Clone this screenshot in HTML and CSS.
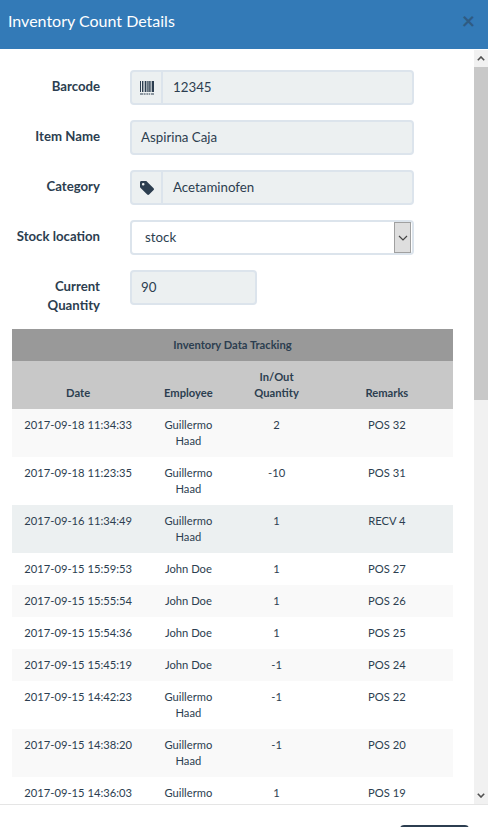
FILE: index.html
```html
<!DOCTYPE html>
<html lang="en">
<head>
    <meta charset="UTF-8">
    <title>Inventory Count Details</title>
    <link rel="stylesheet" href="styles.css">
</head>
<body>
    <div class="modal">
        <div class="modal-header">
            <h4 class="modal-title">Inventory Count Details</h4>
            <span class="close">&times;</span>
        </div>

        <div class="modal-main">
            <div class="modal-body">
                <div class="form-row">
                    <label class="form-label">Barcode</label>
                    <div class="input-group">
                        <span class="addon">
                            <svg class="icon" viewBox="0 0 14 14" width="14" height="14">
                                <path fill="#2c3e50" d="M0 0h1v11H0zM2 0h1v11H2zM3.6 0h.7v11h-.7zM5 0h1.4v11H5zM7 0h.7v11H7zM8.4 0h1.4v11H8.4zM10.4 0h.7v11h-.7zM11.8 0H14v11h-2.2zM0 12.6h3v1H0zM3.6 12.6h2v1h-2zM6.4 12.6h1.6v1H6.4zM8.6 12.6H10v1H8.6zM10.8 12.6H14v1h-3.2z"/>
                            </svg>
                        </span>
                        <div class="form-control">12345</div>
                    </div>
                </div>
                <div class="form-row">
                    <label class="form-label">Item Name</label>
                    <div class="form-control boxed">Aspirina Caja</div>
                </div>
                <div class="form-row">
                    <label class="form-label">Category</label>
                    <div class="input-group">
                        <span class="addon">
                            <svg class="icon" viewBox="0 0 14 14" width="14" height="14">
                                <path fill="#2c3e50" d="M0 1.4C0 .6.6 0 1.4 0h4.4c.4 0 .8.2 1 .4l6.8 6.8c.5.5.5 1.4 0 1.9l-4.5 4.5c-.5.5-1.4.5-1.9 0L.4 6.8C.2 6.6 0 6.2 0 5.8zM3.2 2a1.3 1.3 0 1 0 0 2.6 1.3 1.3 0 0 0 0-2.6z"/>
                            </svg>
                        </span>
                        <div class="form-control">Acetaminofen</div>
                    </div>
                </div>
                <div class="form-row">
                    <label class="form-label">Stock location</label>
                    <div class="select-box">
                        <span class="select-value">stock</span>
                        <span class="select-arrow">
                            <svg viewBox="0 0 10 6" width="10" height="6">
                                <path d="M1 1l4 4 4-4" fill="none" stroke="#444" stroke-width="1.2"/>
                            </svg>
                        </span>
                    </div>
                </div>
                <div class="form-row">
                    <label class="form-label">Current Quantity</label>
                    <div class="form-control boxed short">90</div>
                </div>

                <table class="tracking">
                    <colgroup>
                        <col class="col-wide">
                        <col class="col-narrow">
                        <col class="col-narrow">
                        <col class="col-wide">
                    </colgroup>
                    <thead>
                        <tr class="caption-row"><th colspan="4">Inventory Data Tracking</th></tr>
                        <tr class="head-row">
                            <th>Date</th>
                            <th>Employee</th>
                            <th>In/Out Quantity</th>
                            <th>Remarks</th>
                        </tr>
                    </thead>
                    <tbody>
                        <tr><td>2017-09-18 11:34:33</td><td>Guillermo Haad</td><td>2</td><td>POS 32</td></tr>
                        <tr><td>2017-09-18 11:23:35</td><td>Guillermo Haad</td><td>-10</td><td>POS 31</td></tr>
                        <tr class="hover"><td>2017-09-16 11:34:49</td><td>Guillermo Haad</td><td>1</td><td>RECV 4</td></tr>
                        <tr><td>2017-09-15 15:59:53</td><td>John Doe</td><td>1</td><td>POS 27</td></tr>
                        <tr><td>2017-09-15 15:55:54</td><td>John Doe</td><td>1</td><td>POS 26</td></tr>
                        <tr><td>2017-09-15 15:54:36</td><td>John Doe</td><td>1</td><td>POS 25</td></tr>
                        <tr><td>2017-09-15 15:45:19</td><td>John Doe</td><td>-1</td><td>POS 24</td></tr>
                        <tr><td>2017-09-15 14:42:23</td><td>Guillermo Haad</td><td>-1</td><td>POS 22</td></tr>
                        <tr><td>2017-09-15 14:38:20</td><td>Guillermo Haad</td><td>-1</td><td>POS 20</td></tr>
                        <tr><td>2017-09-15 14:36:03</td><td>Guillermo</td><td>1</td><td>POS 19</td></tr>
                    </tbody>
                </table>
            </div>

            <div class="scrollbar">
                <span class="scroll-btn">
                    <svg viewBox="0 0 8 5" width="8" height="5"><path d="M.8 4.2L4 1l3.2 3.2" fill="none" stroke="#505050" stroke-width="1.6"/></svg>
                </span>
                <div class="scroll-thumb"></div>
                <div class="scroll-track"></div>
                <span class="scroll-btn">
                    <svg viewBox="0 0 8 5" width="8" height="5"><path d="M.8.8L4 4 7.2.8" fill="none" stroke="#505050" stroke-width="1.6"/></svg>
                </span>
            </div>
        </div>

        <div class="modal-footer">
            <div class="btn"></div>
        </div>
    </div>
</body>
</html>
```

FILE: styles.css
```css
* {
    box-sizing: border-box;
    margin: 0;
    padding: 0;
}

html, body {
    height: 827px;
    overflow: hidden;
}

body {
    font-family: Lato, 'Open Sans', sans-serif;
    font-size: 13.3px;
    color: #2c3e50;
    background: white;
}

.modal {
    display: flex;
    flex-direction: column;
    height: 827px;
}

.modal-header {
    display: flex;
    align-items: center;
    justify-content: space-between;
    height: 49px;
    padding: 0 13px 8px 8px;
    background: #337ab7;
}

.modal-title {
    font-size: 16px;
    font-weight: 400;
    color: white;
}

.close {
    font-size: 23px;
    font-weight: bold;
    line-height: 1;
    color: #2c3e50;
    opacity: 0.5;
}

.modal-main {
    display: flex;
    height: 755px;
    overflow: hidden;
}

.modal-body {
    flex: 1;
    padding: 21px 21px 0 12px;
    overflow: hidden;
}

.form-row {
    display: flex;
    align-items: flex-start;
    margin-bottom: 15px;
}

.form-label {
    flex: none;
    width: 88px;
    margin-right: 30px;
    padding-top: 7px;
    font-size: 13.2px;
    font-weight: 700;
    line-height: 19px;
    text-align: right;
}

.input-group {
    display: flex;
    width: 284px;
    height: 35px;
    background: #ecf0f1;
    border: 2px solid #dce4ec;
    border-radius: 4px;
}

.addon {
    display: flex;
    flex: none;
    align-items: center;
    justify-content: center;
    width: 31px;
    border-right: 2px solid #dce4ec;
}

.form-control {
    flex: 1;
    padding: 0 9px 0 10px;
    line-height: 31px;
}

.boxed {
    flex: none;
    width: 284px;
    height: 35px;
    padding-left: 9px;
    background: #ecf0f1;
    border: 2px solid #dce4ec;
    border-radius: 4px;
}

.short {
    width: 127px;
}

.select-box {
    display: flex;
    justify-content: space-between;
    width: 284px;
    height: 35px;
    padding-right: 1px;
    background: white;
    border: 2px solid #dce4ec;
    border-radius: 4px;
}

.select-value {
    padding-left: 13px;
    line-height: 31px;
}

.select-arrow {
    display: flex;
    align-items: center;
    justify-content: center;
    width: 17px;
    background: #dedede;
    border: 1px solid #a0a0a0;
}

.tracking {
    width: 441px;
    margin-top: -1px;
    border-collapse: collapse;
    table-layout: fixed;
    font-size: 11.2px;
    line-height: 16px;
    text-align: center;
}

.tracking th {
    padding: 8px;
    font-weight: 700;
    vertical-align: bottom;
}

.caption-row th {
    background: #999;
}

.head-row th {
    background: #c8c8c8;
}

.col-wide {
    width: 30%;
}

.col-narrow {
    width: 20%;
}

.tracking td {
    padding: 8px;
    vertical-align: top;
}

.tracking tbody tr:nth-child(odd) {
    background: #f9f9f9;
}

.tracking tbody tr.hover {
    background: #ecf0f1;
}

.scrollbar {
    display: flex;
    flex: none;
    flex-direction: column;
    width: 14px;
    margin-top: 1px;
    background: #f1f1f1;
}

.scroll-btn {
    display: flex;
    flex: none;
    align-items: center;
    justify-content: center;
    height: 17px;
}

.scroll-thumb {
    flex: none;
    height: 333px;
    background: #c8c8c8;
}

.scroll-track {
    flex: 1;
}

.modal-footer {
    flex: none;
    display: flex;
    justify-content: flex-end;
    height: 23px;
    padding: 20px 19px 0 0;
    border-top: 1px solid #e5e5e5;
    overflow: hidden;
}

.btn {
    flex: none;
    width: 69px;
    height: 45px;
    background: #2c3e50;
    border-radius: 4px;
}
```
